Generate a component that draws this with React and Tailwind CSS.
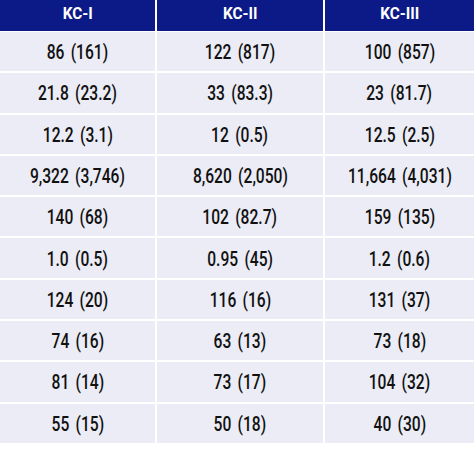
import React from "react";

const rows = [
  ["86 (161)", "122 (817)", "100 (857)"],
  ["21.8 (23.2)", "33 (83.3)", "23 (81.7)"],
  ["12.2 (3.1)", "12 (0.5)", "12.5 (2.5)"],
  ["9,322 (3,746)", "8,620 (2,050)", "11,664 (4,031)"],
  ["140 (68)", "102 (82.7)", "159 (135)"],
  ["1.0 (0.5)", "0.95 (45)", "1.2 (0.6)"],
  ["124 (20)", "116 (16)", "131 (37)"],
  ["74 (16)", "63 (13)", "73 (18)"],
  ["81 (14)", "73 (17)", "104 (32)"],
  ["55 (15)", "50 (18)", "40 (30)"],
];

const font = { fontFamily: '"Liberation Sans Narrow", "Roboto", sans-serif' };

export default function App() {
  return (
    <div className="w-[474px] h-[474px] bg-white overflow-hidden" style={font}>
      <div className="grid grid-cols-[155px_166px_1fr] gap-x-[2px] gap-y-[2px]">
        {["KC-I", "KC-II", "KC-III"].map((h) => (
          <div
            key={h}
            className="h-[31px] -mb-[1px] pb-[3px] bg-[#0c1a88] text-white font-bold text-[17px] flex items-center justify-center"
          >
            <span className="inline-block scale-x-[0.9]">{h}</span>
          </div>
        ))}
        {rows.map((r, i) =>
          r.map((c, j) => (
            <div
              key={i + "-" + j}
              className="h-[39.3px] pt-[2px] bg-[#ebecf5] text-[#111111] font-medium text-[19.5px] flex items-center justify-center"
            >
              <span className="inline-block whitespace-nowrap scale-x-[0.8] [word-spacing:3px]">{c}</span>
            </div>
          ))
        )}
      </div>
    </div>
  );
}
